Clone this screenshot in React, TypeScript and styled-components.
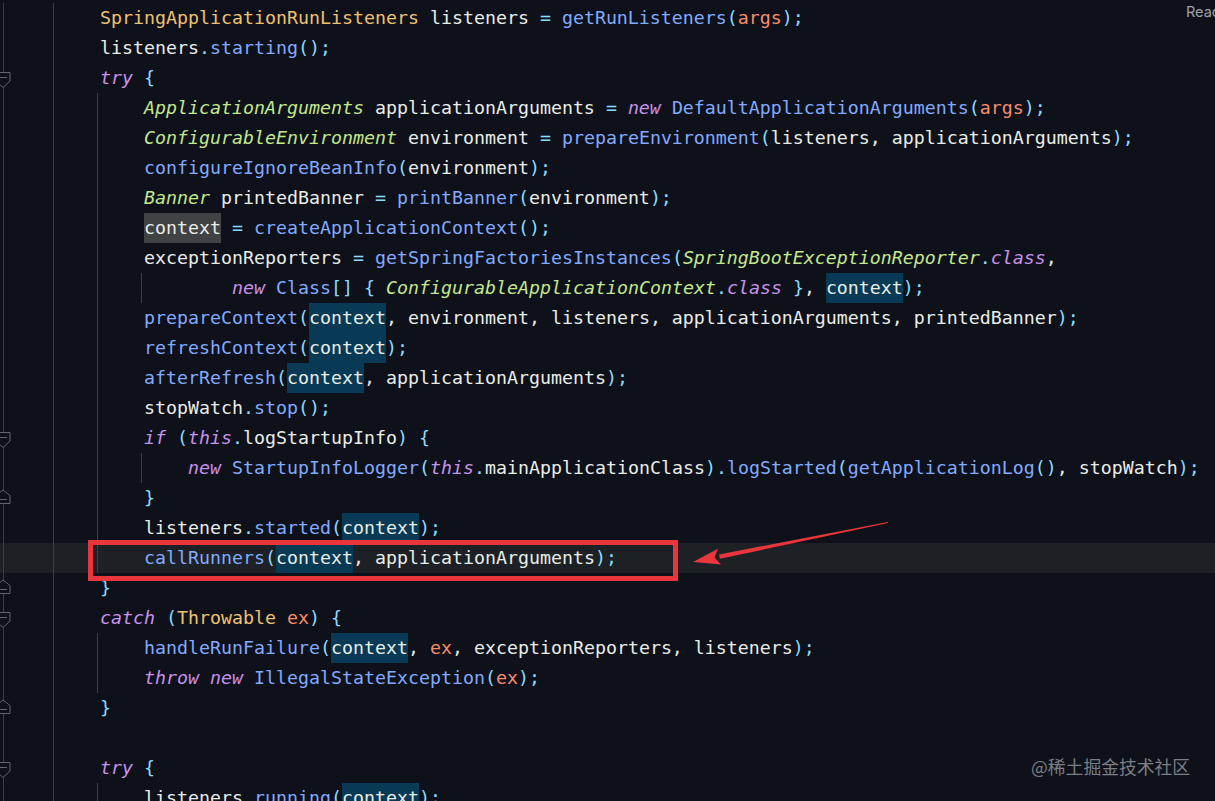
import React from "react";
import styled, { createGlobalStyle, css } from "styled-components";

type Kind = "id" | "ty" | "it" | "fn" | "kw" | "pa" | "pu" | "hl" | "hw";
type Tok = [string, Kind];

interface CodeLine {
  indent: number; // in columns, always a multiple of 4
  guides: number; // how many indent units draw a guide
  fold?: "open" | "close";
  current?: boolean;
  toks: Tok[];
}

const t = (s: string, k: Kind = "id"): Tok => [s, k];
const sp = t(" ");

const LINES: CodeLine[] = [
  { indent: 8, guides: 1, toks: [t("SpringApplicationRunListeners", "ty"), t(" listeners "), t("=", "pu"), sp, t("getRunListeners", "fn"), t("(", "pu"), t("args", "pa"), t(");", "pu")] },
  { indent: 8, guides: 1, toks: [t("listeners"), t(".", "pu"), t("starting", "fn"), t("();", "pu")] },
  { indent: 8, guides: 1, fold: "open", toks: [t("try", "kw"), sp, t("{", "pu")] },
  { indent: 12, guides: 2, toks: [t("ApplicationArguments", "it"), t(" applicationArguments "), t("=", "pu"), sp, t("new", "kw"), sp, t("DefaultApplicationArguments", "fn"), t("(", "pu"), t("args", "pa"), t(");", "pu")] },
  { indent: 12, guides: 2, toks: [t("ConfigurableEnvironment", "it"), t(" environment "), t("=", "pu"), sp, t("prepareEnvironment", "fn"), t("(", "pu"), t("listeners, applicationArguments"), t(");", "pu")] },
  { indent: 12, guides: 2, toks: [t("configureIgnoreBeanInfo", "fn"), t("(", "pu"), t("environment"), t(");", "pu")] },
  { indent: 12, guides: 2, toks: [t("Banner", "it"), t(" printedBanner "), t("=", "pu"), sp, t("printBanner", "fn"), t("(", "pu"), t("environment"), t(");", "pu")] },
  { indent: 12, guides: 2, toks: [t("context", "hw"), sp, t("=", "pu"), sp, t("createApplicationContext", "fn"), t("();", "pu")] },
  { indent: 12, guides: 2, toks: [t("exceptionReporters "), t("=", "pu"), sp, t("getSpringFactoriesInstances", "fn"), t("(", "pu"), t("SpringBootExceptionReporter", "it"), t(".", "pu"), t("class", "kw"), t(",")] },
  { indent: 20, guides: 3, toks: [t("new", "kw"), sp, t("Class", "fn"), t("[]", "pu"), sp, t("{", "pu"), sp, t("ConfigurableApplicationContext", "it"), t(".", "pu"), t("class", "kw"), sp, t("}", "pu"), t(", "), t("context", "hl"), t(");", "pu")] },
  { indent: 12, guides: 2, toks: [t("prepareContext", "fn"), t("(", "pu"), t("context", "hl"), t(", environment, listeners, applicationArguments, printedBanner"), t(");", "pu")] },
  { indent: 12, guides: 2, toks: [t("refreshContext", "fn"), t("(", "pu"), t("context", "hl"), t(");", "pu")] },
  { indent: 12, guides: 2, toks: [t("afterRefresh", "fn"), t("(", "pu"), t("context", "hl"), t(", applicationArguments"), t(");", "pu")] },
  { indent: 12, guides: 2, toks: [t("stopWatch"), t(".", "pu"), t("stop", "fn"), t("();", "pu")] },
  { indent: 12, guides: 2, fold: "open", toks: [t("if", "kw"), sp, t("(", "pu"), t("this", "kw"), t(".", "pu"), t("logStartupInfo"), t(")", "pu"), sp, t("{", "pu")] },
  { indent: 16, guides: 3, toks: [t("new", "kw"), sp, t("StartupInfoLogger", "fn"), t("(", "pu"), t("this", "kw"), t(".", "pu"), t("mainApplicationClass"), t(").", "pu"), t("logStarted", "fn"), t("(", "pu"), t("getApplicationLog", "fn"), t("()", "pu"), t(", stopWatch"), t(");", "pu")] },
  { indent: 12, guides: 2, fold: "close", toks: [t("}", "pu")] },
  { indent: 12, guides: 2, toks: [t("listeners"), t(".", "pu"), t("started", "fn"), t("(", "pu"), t("context", "hl"), t(");", "pu")] },
  { indent: 12, guides: 2, current: true, toks: [t("callRunners", "fn"), t("(", "pu"), t("context", "hl"), t(", applicationArguments"), t(");", "pu")] },
  { indent: 8, guides: 1, fold: "close", toks: [t("}", "pu")] },
  { indent: 8, guides: 1, fold: "open", toks: [t("catch", "kw"), sp, t("(", "pu"), t("Throwable", "ty"), sp, t("ex", "pa"), t(")", "pu"), sp, t("{", "pu")] },
  { indent: 12, guides: 2, toks: [t("handleRunFailure", "fn"), t("(", "pu"), t("context", "hl"), t(", "), t("ex", "pa"), t(", exceptionReporters, listeners"), t(");", "pu")] },
  { indent: 12, guides: 2, toks: [t("throw", "kw"), sp, t("new", "kw"), sp, t("IllegalStateException", "fn"), t("(", "pu"), t("ex", "pa"), t(");", "pu")] },
  { indent: 8, guides: 1, fold: "close", toks: [t("}", "pu")] },
  { indent: 8, guides: 1, toks: [] },
  { indent: 8, guides: 1, fold: "open", toks: [t("try", "kw"), sp, t("{", "pu")] },
  { indent: 12, guides: 2, toks: [t("listeners"), t(".", "pu"), t("running", "fn"), t("(", "pu"), t("context", "hl"), t(");", "pu")] },
];

const BG = "#0f111a";
const GUIDE = "#3a3d45";

const GlobalStyle = createGlobalStyle`
  html, body {
    margin: 0;
    padding: 0;
    background: ${BG};
    overflow: hidden;
  }
`;

const Editor = styled.div`
  position: relative;
  width: 1215px;
  height: 801px;
  overflow: hidden;
  padding-top: 3px;
  box-sizing: border-box;
  background: ${BG};
  font-family: "DejaVu Sans Mono", "Liberation Mono", monospace;
  font-size: 18.27px;
`;

const Row = styled.div<{ $current?: boolean }>`
  display: flex;
  height: 30px;
  line-height: 30px;
  white-space: pre;
  background: ${(p) => (p.$current ? "#1d2125" : "transparent")};
`;

const GutterCell = styled.div`
  flex: none;
  width: 12px;
  height: 30px;
  background: linear-gradient(${GUIDE}, ${GUIDE}) no-repeat 3px 0 / 1px 100%;
`;

const Code = styled.div`
  display: flex;
  align-items: flex-start;
  color: #e9ede8;
`;

const IndentUnit = styled.span<{ $guide: boolean }>`
  display: inline-block;
  width: 44px;
  height: 30px;
  ${(p) =>
    p.$guide &&
    css`
      background: linear-gradient(${GUIDE}, ${GUIDE}) no-repeat 41px 0 / 1px 100%;
    `}
`;

const kindStyle: Record<Kind, ReturnType<typeof css>> = {
  id: css`color: #e9ede8;`,
  ty: css`color: #eec170;`,
  it: css`color: #c3e88d; font-style: italic;`,
  fn: css`color: #82aaff;`,
  kw: css`color: #c792ea; font-style: italic;`,
  pa: css`color: #f78c6c;`,
  pu: css`color: #89ddff;`,
  hl: css`color: #e9ede8; background: #083a55;`,
  hw: css`color: #e9ede8; background: #404244;`,
};

const Token = styled.span<{ $kind: Kind }>`
  display: inline-block;
  height: 30px;
  ${(p) => kindStyle[p.$kind]}
`;

const ReaderMode = styled.div`
  position: absolute;
  left: 1186px;
  top: 3px;
  font-family: Inter, "Noto Sans", sans-serif;
  font-size: 14.5px;
  color: #9ea2a9;
  white-space: nowrap;
`;

const Watermark = styled.div`
  position: absolute;
  left: 1031px;
  top: 753px;
  font-family: "Noto Sans CJK SC", "Noto Sans", sans-serif;
  font-size: 17.8px;
  color: #7b7e85;
  white-space: nowrap;
`;

const Callout = styled.div`
  position: absolute;
  left: 88px;
  top: 540px;
  width: 590px;
  height: 41px;
  border: 5px solid #e8363c;
  box-sizing: border-box;
  pointer-events: none;
`;

const ArrowLayer = styled.svg`
  position: absolute;
  left: 0;
  top: 0;
  pointer-events: none;
`;

function FoldMark({ kind }: { kind: "open" | "close" }) {
  const pts =
    kind === "open"
      ? "-4,9.5 10,9.5 10,18 3,24.5 -4,18"
      : "3,7 10,12.5 10,20.5 -4,20.5 -4,12.5";
  const y = kind === "open" ? 14.5 : 16.5;
  return (
    <svg width="12" height="30" viewBox="0 0 12 30" style={{ display: "block" }}>
      <polygon points={pts} fill={BG} stroke="#60646c" strokeWidth="1" />
      <line x1="-1" y1={y} x2="7" y2={y} stroke="#60646c" strokeWidth="1" />
    </svg>
  );
}

export default function App() {
  return (
    <>
      <GlobalStyle />
      <Editor>
        {LINES.map((line, i) => (
          <Row key={i} $current={line.current}>
            <GutterCell>{line.fold && <FoldMark kind={line.fold} />}</GutterCell>
            <Code>
              {Array.from({ length: line.indent / 4 }).map((_, u) => (
                <IndentUnit key={u} $guide={u < line.guides} />
              ))}
              {line.toks.map(([text, kind], k) => (
                <Token key={k} $kind={kind}>
                  {text}
                </Token>
              ))}
            </Code>
          </Row>
        ))}

        <ReaderMode>Reader Mode</ReaderMode>
        <Callout />
        <ArrowLayer width="1215" height="801" viewBox="0 0 1215 801">
          <polygon points="887.9,521.9 888.1,523.1 719.9,558.8 719.1,554.4" fill="#e8363c" />
          <polygon points="693,562 717.9,548.8 714.6,557.6 721.1,564.4" fill="#e8363c" />
        </ArrowLayer>
        <Watermark>@稀土掘金技术社区</Watermark>
      </Editor>
    </>
  );
}
